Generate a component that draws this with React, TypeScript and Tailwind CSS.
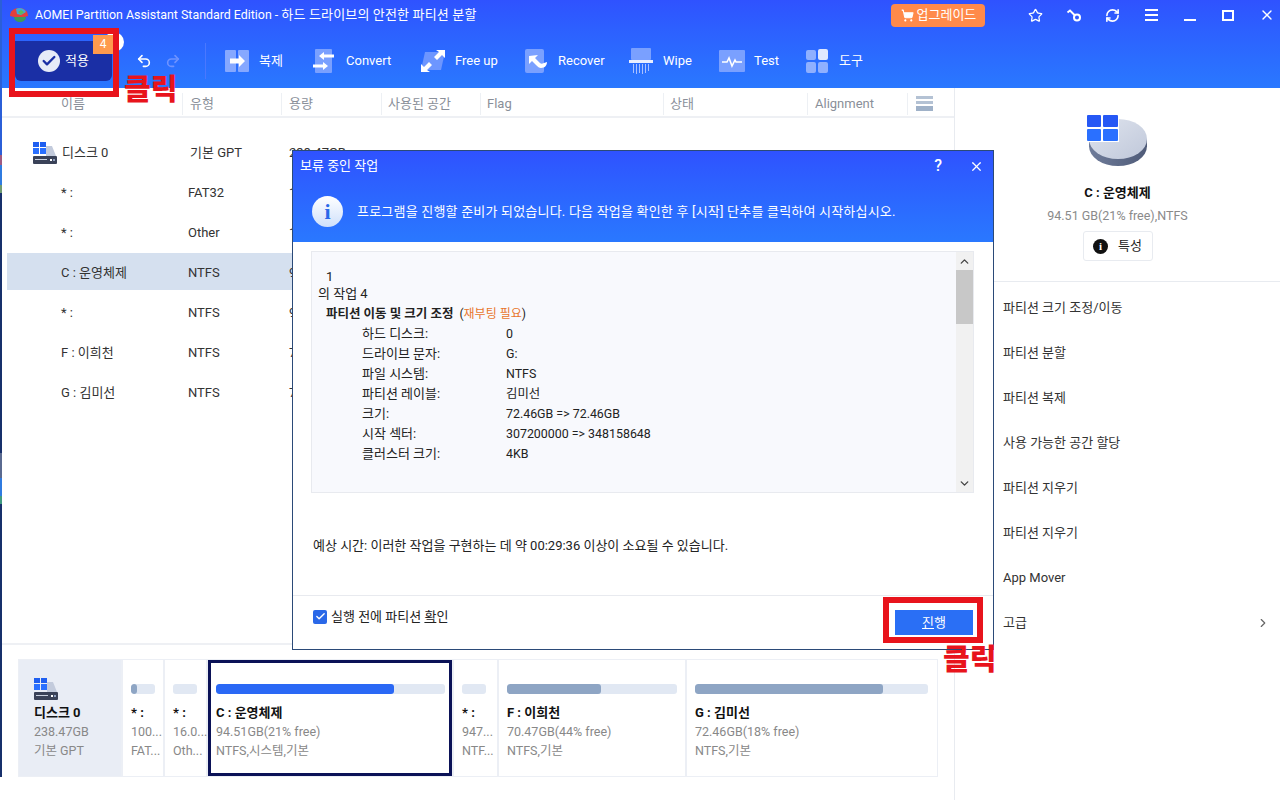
import React from 'react';
import { ChevronDown, ChevronRight, ChevronUp, RefreshCw, ShoppingCart, Star, X, Check, Undo2, Redo2 } from 'lucide-react';

const font = "font-['Roboto','Noto_Sans_CJK_KR',sans-serif]";

const Logo = () => (
  <svg width="20" height="16" viewBox="0 0 20 16">
    <path d="M1 9C1 4 5 1 10 1s9 3 9 8l-4 1H5z" fill="#e2403c" />
    <path d="M7 2c3-2 8-1 10 3l-5 3-4-1z" fill="#3fa8d8" />
    <path d="M9 5l3-2 3 2-3 3z" fill="#5cb85c" />
    <path d="M5 10h12c0 3-3 5-6 5s-6-2-6-5z" fill="#3f9a5a" />
  </svg>
);

const DiskIcon = () => (
  <svg width="24" height="22" viewBox="0 0 24 22">
    <path d="M13 4h6l4 10H13z" fill="#c3cbdc" />
    <rect x="0" y="0" width="6" height="5" fill="#1f5ff0" />
    <rect x="7" y="0" width="6" height="5" fill="#1f5ff0" />
    <rect x="0" y="6" width="6" height="6" fill="#2a70ff" />
    <rect x="7" y="6" width="6" height="6" fill="#2a70ff" />
    <rect x="0" y="14" width="24" height="8" rx="1" fill="#3a4258" />
    <rect x="2" y="17" width="12" height="1" fill="#c9d0de" />
    <rect x="17" y="17" width="2" height="2" fill="#fff" />
    <rect x="20" y="17" width="2" height="2" fill="#8fa0c0" />
  </svg>
);

const BigDisk = () => (
  <svg width="62" height="54" viewBox="0 0 62 54">
    <defs>
      <linearGradient id="top" x1="0" y1="0" x2="1" y2="1">
        <stop offset="0" stopColor="#dfe4ee" />
        <stop offset="1" stopColor="#c0c8da" />
      </linearGradient>
      <linearGradient id="side" x1="0" y1="0" x2="1" y2="0">
        <stop offset="0" stopColor="#6f7c9a" />
        <stop offset="1" stopColor="#4f5b78" />
      </linearGradient>
    </defs>
    <ellipse cx="31" cy="31" rx="29" ry="20" fill="url(#side)" />
    <rect x="2" y="24" width="58" height="8" fill="url(#side)" />
    <ellipse cx="31" cy="24" rx="29" ry="20" fill="url(#top)" />
    <rect x="0" y="0" width="32" height="27" fill="#fff" />
    <rect x="0" y="0" width="14" height="12" rx="1" fill="#2658f5" />
    <rect x="16" y="0" width="15" height="12" rx="1" fill="#2658f5" />
    <rect x="0" y="14" width="14" height="12" rx="1" fill="#2a70ff" />
    <rect x="16" y="14" width="15" height="12" rx="1" fill="#2a70ff" />
  </svg>
);

const KeyIcon = () => (
  <svg width="16" height="14" viewBox="0 0 16 14" fill="none" stroke="#fff" strokeWidth="2">
    <circle cx="11" cy="9.5" r="3" />
    <path d="M9 7.5L4 2.5 1.5 4.5" />
  </svg>
);

const MenuIcon = () => (
  <svg width="13" height="12" viewBox="0 0 13 12" fill="#fff">
    <rect width="13" height="2" />
    <rect y="5" width="13" height="2" />
    <rect y="10" width="13" height="2" />
  </svg>
);

const CopyIcon = () => (
  <svg width="26" height="22" viewBox="0 0 26 22">
    <rect x="1" y="0" width="11" height="22" rx="1" fill="#86a8ff" />
    <rect x="14" y="0" width="11" height="22" rx="1" fill="#86a8ff" />
    <path d="M6 8.500h9V5l6 6-6 6v-3.500H6z" fill="#fff" />
  </svg>
);
const ConvertIcon = () => (
  <svg width="22" height="24" viewBox="0 0 22 24">
    <rect x="2" y="0" width="17" height="24" rx="1" fill="#7aa0ff" />
    <path d="M21 5.500H11V3L6 7l5 4V8.500h10z" fill="#fff" />
    <path d="M0 15.500h10V13l5 4-5 4v-2.500H0z" fill="#fff" />
  </svg>
);
const FreeIcon = () => (
  <svg width="24" height="22" viewBox="0 0 24 22">
    <path d="M4 2h20l-4 18H0z" fill="#6d96ff" />
    <path d="M15 0h9v8l-3-3-5 5-3-3 5-5z" fill="#fff" />
    <path d="M9 22H0v-8l3 3 5-5 3 3-5 5z" fill="#fff" />
  </svg>
);
const RecoverIcon = () => (
  <svg width="22" height="24" viewBox="0 0 22 24">
    <rect x="0" y="0" width="19" height="24" rx="2" fill="#7aa0ff" />
    <path d="M4 7l9-1-3 3 5 5c1 1 2 1 4 0l3-1c0 3-2 6-6 6-2 0-3-1-5-3l-4-4-3 3z" fill="#fff" />
  </svg>
);
const WipeIcon = () => (
  <svg width="24" height="26" viewBox="0 0 24 26">
    <rect x="2" y="0" width="20" height="12" rx="1" fill="#7aa0ff" />
    <rect x="0" y="12" width="24" height="3" fill="#e8eeff" />
    <g fill="#a9c0ff">
      <rect x="4" y="16" width="1" height="9" />
      <rect x="7" y="16" width="1" height="10" />
      <rect x="10" y="16" width="1" height="9" />
      <rect x="13" y="16" width="1" height="10" />
      <rect x="16" y="16" width="1" height="9" />
      <rect x="19" y="16" width="1" height="7" />
    </g>
  </svg>
);
const TestIcon = () => (
  <svg width="26" height="22" viewBox="0 0 26 22">
    <rect x="0" y="0" width="26" height="22" rx="1" fill="#7aa0ff" />
    <path d="M3 12h5l2-4 3 8 3-6 1 2h6" fill="none" stroke="#fff" strokeWidth="1.6" />
  </svg>
);
const ToolsIcon = () => (
  <svg width="22" height="24" viewBox="0 0 22 24">
    <rect x="0" y="1" width="10" height="10" rx="2" fill="#8fb0ff" />
    <rect x="12" y="0" width="10" height="11" rx="2" fill="#dfe8ff" />
    <rect x="0" y="13" width="10" height="11" rx="2" fill="#8fb0ff" />
    <rect x="12" y="13" width="10" height="11" rx="2" fill="#8fb0ff" />
  </svg>
);

const tools = [
  { icon: <CopyIcon />, label: '복제', w: 'w-[87px]' },
  { icon: <ConvertIcon />, label: 'Convert', w: 'w-[109px]' },
  { icon: <FreeIcon />, label: 'Free up', w: 'w-[103px]' },
  { icon: <RecoverIcon />, label: 'Recover', w: 'w-[105px]' },
  { icon: <WipeIcon />, label: 'Wipe', w: 'w-[91px]' },
  { icon: <TestIcon />, label: 'Test', w: 'w-[85px]' },
  { icon: <ToolsIcon />, label: '도구', w: 'w-[70px]' },
];

const columns = [
  { label: '이름', w: 'w-[176px]', pad: 'pl-[54px]' },
  { label: '유형', w: 'w-[99px]', pad: 'pl-[7px]' },
  { label: '용량', w: 'w-[100px]', pad: 'pl-[7px]' },
  { label: '사용된 공간', w: 'w-[99px]', pad: 'pl-[6px]' },
  { label: 'Flag', w: 'w-[183px]', pad: 'pl-[6px]' },
  { label: '상태', w: 'w-[144px]', pad: 'pl-[6px]' },
  { label: 'Alignment', w: 'w-[100px]', pad: 'pl-[7px]' },
];

const rows = [
  { name: '디스크 0', type: '기본 GPT', size: '238.47GB', disk: true },
  { name: '* :', type: 'FAT32', size: '1' },
  { name: '* :', type: 'Other', size: '1' },
  { name: 'C : 운영체제', type: 'NTFS', size: '9', selected: true },
  { name: '* :', type: 'NTFS', size: '9' },
  { name: 'F : 이희천', type: 'NTFS', size: '7' },
  { name: 'G : 김미선', type: 'NTFS', size: '7' },
];

const details = [
  ['하드 디스크:', '0'],
  ['드라이브 문자:', 'G:'],
  ['파일 시스템:', 'NTFS'],
  ['파티션 레이블:', '김미선'],
  ['크기:', '72.46GB => 72.46GB'],
  ['시작 섹터:', '307200000 => 348158648'],
  ['클러스터 크기:', '4KB'],
];

const actions = ['파티션 크기 조정/이동', '파티션 분할', '파티션 복제', '사용 가능한 공간 할당', '파티션 지우기', '파티션 지우기', 'App Mover', '고급'];

const Cell = ({ name, l1, l2, bar, fill, color, selected, w }: { name: string; l1: string; l2: string; bar: string; fill: string; color: string; selected?: boolean; w: string }) => (
  <div className={`${w} h-full bg-white shrink-0 flex flex-col box-border ${selected ? 'border-[3px] border-[#0b1257] px-[5px] pt-[21px]' : 'px-[8px] pt-[24px]'}`}>
    <div className={`${bar} h-[10px] rounded-[3px] bg-[#e1e8f3] overflow-hidden`}>
      <div className={`${fill} ${color} h-full rounded-[3px]`} />
    </div>
    <div className="mt-[9px] text-[13px] leading-[19px] font-bold text-[#111] whitespace-nowrap">{name}</div>
    <div className="text-[12.5px] leading-[19px] text-[#888] whitespace-nowrap">{l1}</div>
    <div className="text-[12.5px] leading-[19px] text-[#888] whitespace-nowrap">{l2}</div>
  </div>
);

const ClickLabel = ({ className }: { className: string }) => (
  <div className={`absolute text-[29px] leading-[30px] font-black text-[#e8141c] ${className}`}>클릭</div>
);

export default function App() {
  return (
    <div className={`relative w-[1280px] h-[800px] overflow-hidden bg-white flex ${font}`}>
      {/* sliver of the desktop behind the window */}
      <div className="w-[2px] h-[777px] bg-[#17306b] shrink-0 flex flex-col">
        <div className="h-[155px] bg-[#2b5fd8]" />
        <div className="h-[10px] bg-[#a05a80]" />
        <div className="h-[20px] bg-[#2f7be0]" />
        <div className="h-[8px] bg-[#6f9a70]" />
        <div className="h-[260px]" />
        <div className="h-[25px] bg-[#5a6a90]" />
        <div className="h-[18px] bg-[#2f7be0]" />
        <div className="h-[8px] bg-[#3f9a80]" />
      </div>
      <div className="flex-1 flex flex-col min-w-0">
        <header className="h-[88px] shrink-0 bg-gradient-to-b from-[#2f52ff] to-[#2a78ff] flex flex-col text-white">
          <div className="h-[30px] flex items-center pl-[7px] pr-[5px]">
            <Logo />
            <span className="ml-[6px] flex-1 text-[13px] tracking-[0.15px] whitespace-nowrap">
              <span className="text-[12.4px] tracking-normal">AOMEI Partition Assistant Standard Edition - </span>하드 드라이브의 안전한 파티션 분할
            </span>
            <div className="w-[94px] h-[23px] rounded-[4px] bg-[#ff8a4a] flex items-center justify-center gap-[3px] text-[13px] shrink-0">
              <ShoppingCart size={13} fill="#fff" />
              <span>업그레이드</span>
            </div>
            <div className="ml-[42px] flex items-center gap-[22.6px] shrink-0">
              <div className="w-[16px] flex justify-center"><Star size={15} strokeWidth={2} /></div>
              <div className="w-[16px] flex justify-center"><KeyIcon /></div>
              <div className="w-[16px] flex justify-center"><RefreshCw size={15} strokeWidth={2.6} /></div>
              <div className="w-[16px] flex justify-center"><MenuIcon /></div>
              <div className="w-[16px] flex justify-center pt-[9px]"><div className="w-[12px] h-[2px] bg-white" /></div>
              <div className="w-[16px] flex justify-center"><div className="w-[12px] h-[11px] border-2 border-white" /></div>
              <div className="w-[16px] flex justify-center"><X size={16} strokeWidth={2} /></div>
            </div>
          </div>
          <div className="flex-1 flex items-center pt-[4px]">
            <div className="ml-[13px] w-[97px] h-[40px] rounded-b-[6px] bg-[#1a2fa5] flex items-center pl-[23px] gap-[5px] shrink-0">
              <div className="w-[22px] h-[22px] rounded-full bg-[#e6ebf8] flex items-center justify-center">
                <Check size={16} strokeWidth={3.5} className="text-[#1a2fa5]" />
              </div>
              <span className="text-[13px]">적용</span>
            </div>
            <div className="ml-[24px] flex items-center gap-[13px]">
              <Undo2 size={16} strokeWidth={2.4} />
              <Redo2 size={16} strokeWidth={2.4} className="text-[#6f93ff]" />
            </div>
            <div className="ml-[24px] w-px h-[36px] bg-[#4a78ff]" />
            <div className="ml-[18px] flex items-center">
              {tools.map((t) => (
                <div key={t.label} className={`${t.w} flex items-center gap-[9px] shrink-0 text-[13px]`}>
                  <div className="w-[26px] flex justify-center">{t.icon}</div>
                  <span>{t.label}</span>
                </div>
              ))}
            </div>
          </div>
        </header>

        <div className="flex-1 flex min-h-0">
          <main className="w-[952px] shrink-0 flex flex-col">
            <div className="h-[30px] shrink-0 border-b-[2px] border-[#eef0f4] flex items-center text-[13px] text-[#8a8f99] pl-[5px] pt-[3px]">
              {columns.map((c) => (
                <div key={c.label} className={`${c.w} ${c.pad} h-[22px] flex items-center border-r border-[#edf0f4] shrink-0`}>{c.label}</div>
              ))}
              <div className="pl-[8px]">
                <div className="w-[17px] flex flex-col gap-[2px]">
                  <div className="h-[3px] bg-[#b4c2d4]" />
                  <div className="h-[3px] bg-[#b4c2d4]" />
                  <div className="h-[5px] bg-[#9fb1c8]" />
                </div>
              </div>
            </div>
            <div className="flex-1 pt-[15px] pl-[5px]">
              {rows.map((r, i) => (
                <div key={i} className={`h-[40px] flex items-center text-[13px] text-[#333] ${r.selected ? 'bg-[linear-gradient(#d5e0ef_37px,#fff_37px)]' : ''}`}>
                  <div className="w-[176px] pl-[26px] flex items-center shrink-0">
                    <div className="w-[28px] shrink-0">{r.disk ? <DiskIcon /> : null}</div>
                    <span className={r.disk ? 'ml-[1px]' : ''}>{r.name}</span>
                  </div>
                  <div className={`w-[99px] shrink-0 ${r.disk ? 'pl-[7px]' : 'pl-[5px]'}`}>{r.type}</div>
                  <div className="pl-[7px]">{r.size}</div>
                </div>
              ))}
            </div>
            <div className="h-[157px] shrink-0 border-t-[2px] border-[#eef0f4] pl-[16px] pt-[14px]">
              <div className="w-[920px] h-[118px] bg-[#eceff5] flex gap-[2px] p-[1px] pr-[2px]">
                <div className="w-[102px] h-full shrink-0 bg-[#e9edf5] pl-[15px] pt-[18px] text-[12.5px] leading-[19px] text-[#888]">
                  <DiskIcon />
                  <div className="mt-[3px] font-bold text-[13px] text-[#111]">디스크 0</div>
                  <div>238.47GB</div>
                  <div>기본 GPT</div>
                </div>
                <Cell w="w-[40px]" bar="w-[24px]" fill="w-[6px]" color="bg-[#8ea5c4]" name="* :" l1="100..." l2="FAT..." />
                <Cell w="w-[41px]" bar="w-[24px]" fill="w-0" color="bg-[#8ea5c4]" name="* :" l1="16.0..." l2="Oth..." />
                <Cell selected w="w-[244px]" bar="w-[229px]" fill="w-[178px]" color="bg-[#2a68f5]" name="C : 운영체제" l1="94.51GB(21% free)" l2="NTFS,시스템,기본" />
                <Cell w="w-[43px]" bar="w-[24px]" fill="w-0" color="bg-[#8ea5c4]" name="* :" l1="947..." l2="NTF..." />
                <Cell w="w-[186px]" bar="w-[170px]" fill="w-[94px]" color="bg-[#8ea5c4]" name="F : 이희천" l1="70.47GB(44% free)" l2="NTFS,기본" />
                <Cell w="w-[250px]" bar="w-[233px]" fill="w-[188px]" color="bg-[#8ea5c4]" name="G : 김미선" l1="72.46GB(18% free)" l2="NTFS,기본" />
              </div>
            </div>
          </main>

          <aside className="flex-1 border-l border-[#e8ebf0] flex flex-col text-[13px] text-[#333]">
            <div className="h-[194px] shrink-0 border-b border-[#e8ebf0] flex flex-col items-center pt-[27px]">
              <BigDisk />
              <div className="mt-[15px] font-bold text-[#111] leading-[18px]">C : 운영체제</div>
              <div className="mt-[5px] text-[12.5px] text-[#8a8a8a] leading-[18px]">94.51 GB(21% free),NTFS</div>
              <div className="mt-[6px] w-[70px] h-[30px] rounded-[3px] border border-[#e8ebf0] flex items-center justify-center gap-[10px] text-[#222]">
                <div className="w-[15px] h-[15px] rounded-full bg-[#111] text-white font-bold text-[11px] leading-[15px] text-center font-['Liberation_Serif',serif]">i</div>
                <span>특성</span>
              </div>
            </div>
            <div className="pl-[48px] pr-[10px] pt-[3px]">
              {actions.map((a, i) => (
                <div key={i} className="h-[45px] flex items-center justify-between">
                  <span>{a}</span>
                  {a === '고급' && <ChevronRight size={14} className="text-[#666]" />}
                </div>
              ))}
            </div>
          </aside>
        </div>
      </div>

      {/* pending operations dialog */}
      <div className="absolute left-[292px] top-[150px] w-[702px] h-[500px] bg-white border border-[#2b4a78] flex flex-col text-[13px] text-[#222]">
        <div className="h-[91px] shrink-0 bg-gradient-to-b from-[#2f52ff] to-[#2a78ff] text-white flex flex-col">
          <div className="h-[30px] flex items-center justify-between pl-[7px] pr-[9px]">
            <span>보류 중인 작업</span>
            <div className="flex items-center gap-[27px]">
              <span className="text-[16px] font-medium leading-[20px]">?</span>
              <X size={15} strokeWidth={2} />
            </div>
          </div>
          <div className="flex-1 flex items-center pl-[19px]">
            <div className="w-[31px] h-[31px] rounded-full bg-gradient-to-b from-white to-[#cfe0fb] flex items-center justify-center text-[#2a68e8] text-[22px] font-bold font-['Liberation_Serif',serif]">i</div>
            <span className="ml-[14px] tracking-[0.2px]">프로그램을 진행할 준비가 되었습니다. 다음 작업을 확인한 후 [시작] 단추를 클릭하여 시작하십시오.</span>
          </div>
        </div>
        <div className="ml-[18px] mr-[19px] mt-[9px] h-[242px] shrink-0 bg-[#f8f9fd] border border-[#e8eaef] flex">
          <div className="flex-1 pt-[16px] leading-[20px]">
            <div className="pl-[14px] leading-[17px]">1</div>
            <div className="pl-[6px] leading-[18px]">의 작업 4</div>
            <div className="pl-[14px] mt-[1px]"><span className="font-bold text-[12.5px]">파티션 이동 및 크기 조정</span><span className="ml-[6px] text-[12px]">(<span className="text-[#e8762c]">재부팅 필요</span>)</span></div>
            {details.map(([k, v]) => (
              <div key={k} className="flex">
                <div className="w-[194px] pl-[50px] shrink-0">{k}</div>
                <div className="text-[12.4px]">{v}</div>
              </div>
            ))}
          </div>
          <div className="w-[17px] shrink-0 bg-[#f1f1f1] flex flex-col items-center justify-between">
            <div className="w-full">
              <div className="h-[18px] flex items-center justify-center"><ChevronUp size={13} strokeWidth={2.5} className="text-[#444]" /></div>
              <div className="h-[54px] bg-[#c8c8c8]" />
            </div>
            <div className="h-[18px] flex items-center justify-center"><ChevronDown size={13} strokeWidth={2.5} className="text-[#444]" /></div>
          </div>
        </div>
        <div className="flex-1 pl-[20px] pt-[43px]">예상 시간: 이러한 작업을 구현하는 데 약 00:29:36 이상이 소요될 수 있습니다.</div>
        <div className="h-[54px] shrink-0 border-t border-[#e8eaef] flex items-center justify-between pl-[20px] pr-[20px]">
          <div className="flex items-center gap-[4px] mb-[12px]">
            <div className="w-[14px] h-[14px] rounded-[2px] bg-[#2a68e8] flex items-center justify-center">
              <Check size={11} strokeWidth={3} className="text-white" />
            </div>
            <span>실행 전에 파티션 <span className="underline">확</span>인</span>
          </div>
          <div className="w-[78px] h-[25px] bg-[#2a6ff5] text-white flex items-center justify-center"><span className="underline">진</span>행</div>
        </div>
      </div>

      {/* orange badge and red annotations pasted on the screenshot */}
      <div className="absolute left-[104px] top-[32px] w-[20px] h-[20px] rounded-full bg-white" />
      <div className="absolute left-[93px] top-[35px] w-[20px] h-[19px] bg-[#ff9a4d] text-white text-[12px] leading-[19px] text-center">4</div>
      <div className="absolute left-[9px] top-[28px] w-[110px] h-[69px] border-[6px] border-[#e8141c]" />
      <ClickLabel className="left-[124px] top-[75px]" />
      <div className="absolute left-[883px] top-[597px] w-[100px] h-[46px] border-[6px] border-[#e8141c]" />
      <ClickLabel className="left-[943px] top-[645px]" />
    </div>
  );
}
